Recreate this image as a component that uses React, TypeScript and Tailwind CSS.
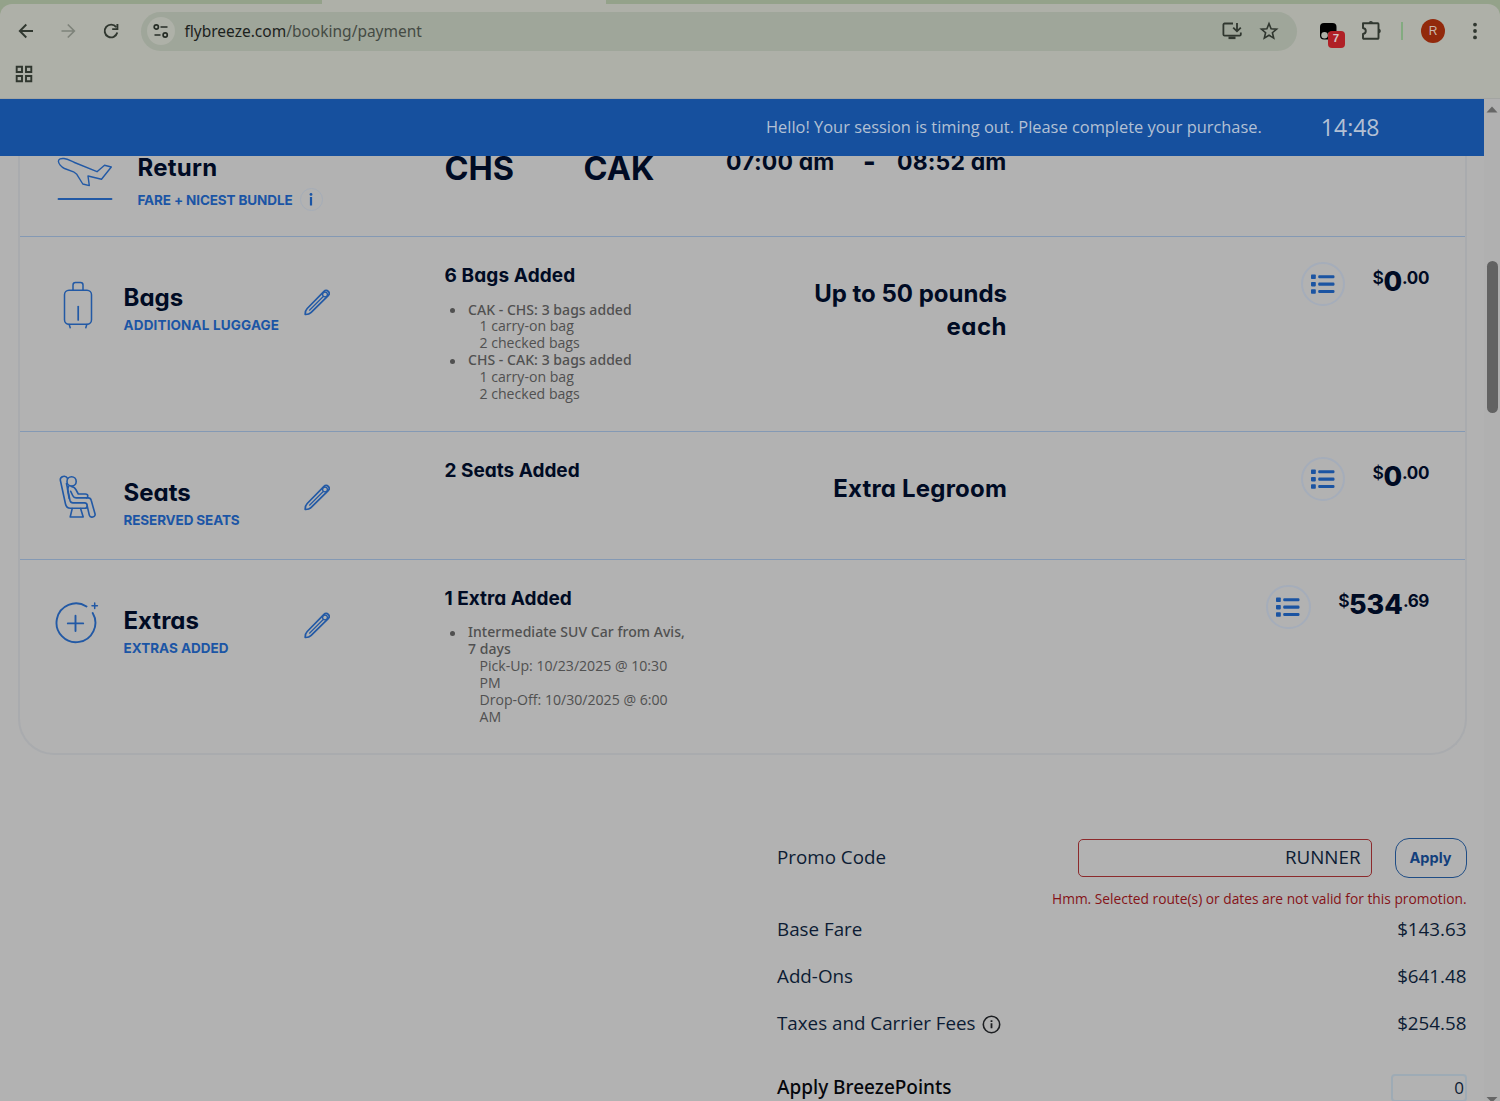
import React from "react";

const HEAD = "font-['Inter',sans-serif] font-bold [font-feature-settings:'cv11'] whitespace-nowrap text-[#000b24]";
const SUB = "font-['Inter',sans-serif] font-bold whitespace-nowrap text-[13.500px] leading-[18px] text-[#1b55a5]";
const OPEN = "font-['Open_Sans',sans-serif]";
const NOTO = "font-['Noto_Sans',sans-serif]";

function Toolbar() {
  return (
    <div className="h-[99px] bg-[#94a28a] pt-1">
      <div className="relative h-full rounded-t-[12px] border-b border-[#a3a5a2] bg-[#aeb0a8]">
        <div className="absolute -top-1 left-[322px] h-1 w-[284px] bg-[#aeb0a8]" />
        <div className="flex h-[54px] items-center pl-[16px]">
          <svg width="20" height="20" viewBox="0 0 20 20" fill="none" stroke="#30372f" strokeWidth="1.9">
            <path d="M17 10H4.2M10.3 3.5L3.8 10l6.5 6.5" />
          </svg>
          <svg className="ml-[22px]" width="20" height="20" viewBox="0 0 20 20" fill="none" stroke="#7e837a" strokeWidth="1.7">
            <path d="M3.5 10h12.8M9.8 3.5l6.5 6.5-6.5 6.5" />
          </svg>
          <svg className="ml-[23px]" width="20" height="20" viewBox="0 0 20 20" fill="none" stroke="#30372f" strokeWidth="1.9">
            <path d="M15.2 6.1A6.4 6.4 0 1 0 16.3 11.6" />
            <path d="M16.4 2.9v5.2h-5.2" />
          </svg>
          <div className="ml-[20px] flex h-[39px] w-[1156px] items-center rounded-full bg-[#9fa69a] pl-[6px] pr-[18px]">
            <div className="flex h-7 w-7 items-center justify-center rounded-full bg-[#aeb1a8]">
              <svg width="16" height="14" viewBox="0 0 16 14" fill="none" stroke="#262d26" strokeWidth="1.7">
                <circle cx="3.3" cy="3" r="2.1" />
                <path d="M7.5 3h7M1.5 11h6" />
                <circle cx="12.2" cy="11" r="2.1" />
              </svg>
            </div>
            <div className={`${NOTO} mb-[1px] ml-[9.500px] flex-1 text-[15.500px] leading-5 text-[#454b44]`}>
              <span className="text-[#1c221d]">flybreeze.com</span>/booking/payment
            </div>
            <svg className="mr-[17px]" width="20" height="18" viewBox="0 0 20 18" fill="none" stroke="#30372f" strokeWidth="1.8">
              <path d="M11 1.5H2.6a1.2 1.2 0 0 0-1.2 1.2v9.8a1.2 1.2 0 0 0 1.2 1.2h15a1.2 1.2 0 0 0 1.2-1.2V10.5" />
              <path d="M6.5 15.8h7" strokeWidth="2.6" />
              <path d="M15 1v8M11.2 5.6L15 9.3l3.8-3.7" />
            </svg>
            <svg width="20" height="20" viewBox="0 0 20 20" fill="none" stroke="#30372f" strokeWidth="1.6">
              <path d="M10 2.6l2.1 5.1 5.5.4-4.2 3.6 1.3 5.4L10 14.2l-4.7 2.9 1.3-5.4-4.2-3.6 5.5-.4z" />
            </svg>
          </div>
          <div className="relative ml-[23px] h-[17px] w-4 overflow-visible">
            <svg width="17" height="17" viewBox="0 0 17 17">
              <rect x="0" y="0" width="16.500" height="16.500" rx="4" fill="#000" />
              <circle cx="4.500" cy="12.200" r="3.200" fill="#aeb1a8" />
              <circle cx="10.800" cy="12.200" r="3.200" fill="#aeb1a8" />
            </svg>
            <div className="absolute left-[7.500px] top-2 flex h-[17px] w-[17px] items-center justify-center rounded-[4px] bg-[#b02026] font-['Liberation_Sans',sans-serif] text-[11.500px] font-bold leading-none text-[#d4c4c4]">
              7
            </div>
          </div>
          <svg className="ml-[25px]" width="22" height="22" viewBox="0 0 22 22">
            <path d="M2 3.200h14.700a.8.8 0 0 1 .8.800v14a.8.8 0 0 1-.8.800H2.800a.8.8 0 0 1-.8-.8v-4c1.700-.3 2.800-1.500 2.800-3s-1.100-2.700-2.800-3z" fill="none" stroke="#30372f" strokeWidth="1.900" strokeLinejoin="round" />
            <path d="M7.600 2.800a2.300 2.300 0 0 1 4.500 0zM18 8.700a2.300 2.300 0 0 1 0 4.500z" fill="#30372f" />
          </svg>
          <div className="ml-[18px] h-[18px] w-[2px] bg-[#83ab80]" />
          <div className="ml-[18px] flex h-6 w-6 items-center justify-center rounded-full bg-[#92290c] font-['Liberation_Sans',sans-serif] text-[12px] leading-none text-[#c9b8ae]">
            R
          </div>
          <svg className="ml-[28px]" width="4" height="18" viewBox="0 0 4 18" fill="#30372f">
            <circle cx="2" cy="2.600" r="1.900" />
            <circle cx="2" cy="9" r="1.900" />
            <circle cx="2" cy="15.400" r="1.900" />
          </svg>
        </div>
        <svg className="ml-[15px] mt-[7px]" width="18" height="18" viewBox="0 0 18 18" fill="none" stroke="#30372f" strokeWidth="1.900">
          <path d="M1.700 1.700h5.300v5.300h-5.300zM11 1.700h5.300v5.300h-5.300zM1.700 11h5.300v5.300h-5.300zM11 11h5.300v5.300h-5.300z" />
        </svg>
      </div>
    </div>
  );
}

const STROKE = { fill: "none", stroke: "#2259a5", strokeLinecap: "round", strokeLinejoin: "round" } as const;

function PlaneIcon() {
  return (
    <svg width="56" height="46" viewBox="0 0 56 46" {...STROKE} strokeWidth="1.400">
      <path d="M16.500 15.800L7.500 12.500C4 11 1.500 7.500 1.400 5.200 1.500 3 4 2.200 7 2.500c3.500.3 7 2.500 10.500 4L40 15.700l7.500-6.400 6.800 1.700-9.800 12.300L31 20l1.300 9.600-6.500-1.600-6-9.700z" />
      <path d="M1.500 43h53" strokeWidth="1.900" />
    </svg>
  );
}

function BagIcon() {
  return (
    <svg width="30" height="48" viewBox="0 0 30 48" {...STROKE} strokeWidth="1.500">
      <path d="M10 9.300V4a2.500 2.500 0 0 1 2.500-2.500h5A2.500 2.500 0 0 1 20 4v5.300" />
      <rect x="1.500" y="9.300" width="27" height="34" rx="4.500" />
      <path d="M15.200 25.500v13.500" strokeWidth="1.700" />
      <path d="M6.200 43.500l1 3.200M23.800 43.500l-1 3.200" />
    </svg>
  );
}

function SeatIcon() {
  return (
    <svg width="38" height="44" viewBox="0 0 38 44" {...STROKE} strokeWidth="1.600">
      <circle cx="12.600" cy="6.400" r="4.600" />
      <path d="M8.500 3.400C7.500 1.200 5.500 1 4 1.400 1.800 2 1 3.500 1.400 5.500L6.500 29c.6 3 2.200 4.300 5 4.300h14.500c1.500 0 2.200-1 2.200-2.600s-.9-2.800-2.700-2.800H14c-1.700 0-2.600-.7-3-2.400L7.500 8.500" />
      <path d="M28.200 31l2.100 9.100c.5 1.800 1.900 2.300 3.400 1.900 1.800-.4 2.700-1.600 2.300-3.200L32.200 25.300c-.4-1.700-1.500-2.400-3-2.400H17.500c-1.900 0-3-.7-3.800-2.400l-2-4.200" />
      <path d="M9.500 11.500c-.9 1.500-1 3.500-.6 5l1.300 7M12.300 11.500c2.300.3 4 1.500 4.800 3.500l2.200 4h7c1.600 0 2.500.7 2.500 2 0 1-.5 1.600-1.200 1.900" />
      <path d="M13.200 33.600l-2 8.400h13l-2.600-8.400" />
    </svg>
  );
}

function ExtrasIcon() {
  return (
    <svg width="44" height="44" viewBox="0 0 44 44" {...STROKE} strokeWidth="1.900">
      <path d="M31.500 5.500A19.400 19.400 0 1 0 37.700 12" />
      <path d="M20.500 14.700v15.400M12.800 22.400h15.400" />
      <path d="M39.700 2v5.400M37 4.700h5.400" strokeWidth="1.500" />
    </svg>
  );
}

function PencilIcon() {
  return (
    <svg className="ml-auto mt-[5px]" width="26" height="27" viewBox="0 0 26 27" {...STROKE} strokeWidth="1.700">
      <path d="M1.200 25.500c-.1-2.300.6-4.600 2-6L20 2.300a3 3 0 0 1 4.200 4.300L7.200 23.400c-1.400 1.400-3.700 2.200-6 2.100z" />
      <path d="M5.500 21.200L19 7.800" strokeWidth="1.200" />
      <circle cx="21" cy="5.500" r="2.400" strokeWidth="1.300" />
    </svg>
  );
}

function ListButton() {
  return (
    <div className="flex h-[44.500px] w-[44.500px] items-center justify-center rounded-full border-2 border-[#a5adba]">
      <svg width="24" height="20" viewBox="0 0 24 20" fill="#1b54a2">
        {[0.5, 7.900, 15.200].map((y) => (
          <g key={y}>
            <rect x="0" y={y} width="4.800" height="4.500" rx="0.800" />
            <rect x="7.200" y={y + 0.700} width="16.300" height="3.100" rx="1.200" />
          </g>
        ))}
      </svg>
    </div>
  );
}

function Price({ whole, cents }: { whole: string; cents: string }) {
  return (
    <div className={`${HEAD} flex items-start`}>
      <span className="-mr-[0.500px] text-[17.500px] font-semibold leading-6">$</span>
      <span className="-mt-[1px] text-[27px] font-extrabold leading-[34px]">{whole}</span>
      <span className="text-[17px] leading-6 tracking-[-0.400px]">{cents}</span>
    </div>
  );
}

type RowProps = {
  icon: React.ReactNode;
  title: string;
  sub: string;
  subClass: string;
  middle: React.ReactNode;
  note?: React.ReactNode;
  whole: string;
  cents: string;
  className: string;
};

function Row({ icon, title, sub, subClass, middle, note, whole, cents, className }: RowProps) {
  return (
    <div className={`flex ${className}`}>
      <div className="flex w-[310px] shrink-0 items-start pt-[46.500px]">
        <div className="flex w-[103.500px] shrink-0">{icon}</div>
        <div>
          <div className={`${HEAD} text-[24px] leading-[28px]`}>{title}</div>
          <div className={`${SUB} ${subClass} mt-[4.500px]`}>{sub}</div>
        </div>
        <PencilIcon />
      </div>
      <div className="ml-[114.500px] w-[246px] shrink-0 pt-[27px]">{middle}</div>
      <div className={`${HEAD} w-[316.500px] shrink-0 pt-[41px] text-right text-[24px] leading-[32.500px]`}>{note}</div>
      <div className="flex flex-1 items-start justify-end gap-[27.500px] pr-[36px] pt-[24.500px]">
        <ListButton />
        <div className="pt-[4px]"><Price whole={whole} cents={cents} /></div>
      </div>
    </div>
  );
}

function Detail({ head, lines }: { head: React.ReactNode; lines: React.ReactNode[] }) {
  return (
    <li className="relative pl-[23.500px] text-[14px] leading-[16.900px] text-[#505050]">
      <span className="absolute left-[5px] top-[6.500px] h-[5px] w-[5px] rounded-full bg-[#505050]" />
      <div className={`${NOTO} whitespace-nowrap font-medium tracking-[0.040px]`}>{head}</div>
      {lines.map((l, i) => (
        <div key={i} className={`${OPEN} whitespace-nowrap pl-[11.500px] text-[14.100px]`}>{l}</div>
      ))}
    </li>
  );
}

function Summary({ label, value }: { label: React.ReactNode; value: string }) {
  return (
    <div className="flex h-[47px] items-center justify-between leading-[47px]">
      <span className="flex items-center">{label}</span>
      <span>{value}</span>
    </div>
  );
}

export default function App() {
  return (
    <div className={`${OPEN} flex h-[1101px] w-[1500px] flex-col overflow-hidden bg-[#b2b2b2]`}>
      <Toolbar />
      <div className="flex min-h-0 flex-1">
        <main className="flex w-[1484px] flex-col overflow-hidden">
          <div className="z-10 flex h-[57px] shrink-0 items-center justify-end bg-[#16509e] pr-[104.500px] text-[#b3c0d4]">
            <span className="text-[16.410px]">Hello! Your session is timing out. Please complete your purchase.</span>
            <span className="-mt-[1px] ml-[59px] text-[23px]">14:48</span>
          </div>

          <section className="ml-[18px] h-[599px] w-[1449px] shrink-0 rounded-b-[36px] border-x-2 border-b-2 border-[#a9abae]">
            <div className="flex h-[81px] border-b border-[#8499b4]">
              <div className="w-[117.500px] shrink-0 pl-[37px]"><PlaneIcon /></div>
              <div className="w-[307px]">
                <div className={`${HEAD} -mt-[2.500px] text-[24px] leading-[28px] tracking-[0.270px]`}>Return</div>
                <div className="mt-[6.500px] flex items-center">
                  <span className={`${SUB} -tracking-[0.120px]`}>FARE + NICEST BUNDLE</span>
                  <span className="ml-[7px] flex h-[23px] w-[23px] items-center justify-center rounded-full border border-[#a5adb8]">
                    <svg width="4" height="13" viewBox="0 0 4 13" fill="#1b55a5"><circle cx="2" cy="1.400" r="1.400" /><path d="M.9 4h2.200v8.500H.9z" /></svg>
                  </span>
                </div>
              </div>
              <div className={`${HEAD} -mt-[7px] w-[139px] text-[32.500px] leading-[40px]`}>CHS</div>
              <div className={`${HEAD} -mt-[7px] w-[142.500px] text-[32.500px] leading-[40px]`}>CAK</div>
              <div className={`${HEAD} -mt-[8px] flex text-[23px] leading-[28px] tracking-[0.150px]`}>
                <span className="w-[137px]">07:00 am</span>
                <span className="w-[34px] text-[27px] font-extrabold">-</span>
                <span>08:52 am</span>
              </div>
            </div>
            <Row
              className="h-[195px] border-b border-[#8499b4]"
              icon={<div className="-mt-[2.500px] ml-[42.500px]"><BagIcon /></div>}
              title="Bags"
              sub="ADDITIONAL LUGGAGE"
              subClass="tracking-[0.150px]"
              middle={
                <>
                  <div className={`${HEAD} text-[19px] leading-6 tracking-[0.110px]`}>6 Bags Added</div>
                  <ul className="mt-[13.500px]">
                    <Detail head="CAK - CHS: 3 bags added" lines={["1 carry-on bag", "2 checked bags"]} />
                    <Detail head="CHS - CAK: 3 bags added" lines={["1 carry-on bag", "2 checked bags"]} />
                  </ul>
                </>
              }
              note={<>Up to 50 pounds<br /><span className="tracking-[0.500px]">each</span></>}
              whole="0"
              cents=".00"
            />
            <Row
              className="h-[128px] border-b border-[#8499b4]"
              icon={<div className="-mt-[3.500px] ml-[39px]"><SeatIcon /></div>}
              title="Seats"
              sub="RESERVED SEATS"
              subClass="-tracking-[0.120px]"
              middle={<div className={`${HEAD} text-[19px] leading-6`}>2 Seats Added</div>}
              note={<span className="tracking-[0.200px]">Extra Legroom</span>}
              whole="0"
              cents=".00"
            />
            <Row
              className="h-[192px]"
              icon={<div className="-mt-[6px] ml-[35px]"><ExtrasIcon /></div>}
              title="Extras"
              sub="EXTRAS ADDED"
              subClass=""
              middle={
                <>
                  <div className={`${HEAD} text-[19px] leading-6`}>1 Extra Added</div>
                  <ul className="mt-[13px]">
                    <Detail
                      head={<>Intermediate SUV Car from Avis,<br />7 days</>}
                      lines={[<>Pick-Up: 10/23/2025 @ 10:30<br />PM</>, <>Drop-Off: 10/30/2025 @ 6:00<br />AM</>]}
                    />
                  </ul>
                </>
              }
              whole="534"
              cents=".69"
            />
          </section>

          <section className="ml-[777px] mt-[83px] w-[689.500px] shrink-0 text-[18.800px] text-[#0c1c34]">
            <div className="flex h-10 items-center">
              <span className="-mt-[1px]">Promo Code</span>
              <div className="ml-auto flex h-[38px] w-[294px] items-center justify-end rounded-[5px] border-[1.500px] border-[#8c2a2c] pr-[10px]"><span className="-mt-[1px]">RUNNER</span></div>
              <div className="ml-[23px] flex h-10 w-[72px] items-center justify-center rounded-[14px] border-[1.500px] border-[#1f4d85] font-['Inter',sans-serif] text-[14.500px] font-bold text-[#123f7c]">Apply</div>
            </div>
            <div className="mt-[10.500px] text-right text-[13.780px] leading-5 text-[#851218]">
              Hmm. Selected route(s) or dates are not valid for this promotion.
            </div>
            <div className="-mt-[3px]">
              <Summary label="Base Fare" value="$143.63" />
              <Summary label="Add-Ons" value="$641.48" />
              <Summary
                label={
                  <>
                    Taxes and Carrier Fees
                    <svg className="ml-[6px] mt-[2px]" width="19" height="19" viewBox="0 0 19 19" fill="none" stroke="#1d1f22" strokeWidth="1.600">
                      <circle cx="9.500" cy="9.500" r="8.200" />
                      <path d="M9.500 8.300v5M9.500 5.200v1.900" strokeWidth="1.800" />
                    </svg>
                  </>
                }
                value="$254.58"
              />
            </div>
            <div className="mt-[26px] flex items-start justify-between">
              <span className={`${NOTO} mt-[1px] text-[19px] font-medium leading-[27px] text-[#05070c]`}>Apply BreezePoints</span>
              <div className="mt-[1.500px] flex h-[28px] w-[76px] items-center justify-end rounded-[4px] border-2 border-[#9eabb5] pr-[0.500px] text-[17px] leading-6">0</div>
            </div>
          </section>
        </main>

        <div className="flex w-4 flex-col items-center justify-between bg-[#b0b0b0] pt-[7px]">
          <svg width="12" height="7" viewBox="0 0 12 7" fill="#666"><path d="M6 .5L11.500 6.500H.5z" /></svg>
          <div className="mb-auto ml-[1px] mt-[148px] h-[152px] w-[11px] rounded-full bg-[#626262]" />
          <svg width="12" height="5" viewBox="0 0 12 5" fill="#666"><path d="M.5 1h11L7.500 5h-3z" /></svg>
        </div>
      </div>
    </div>
  );
}
